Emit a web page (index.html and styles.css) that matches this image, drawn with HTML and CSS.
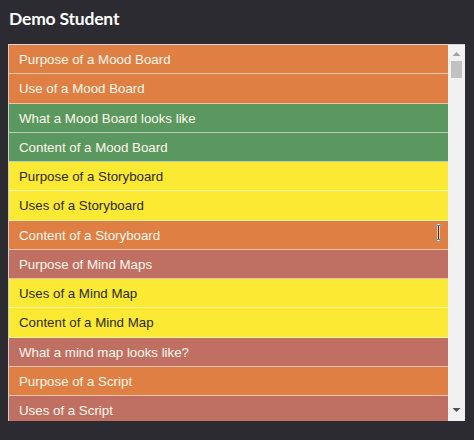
FILE: index.html
```html
<!DOCTYPE html>
<html>
<head>
<meta charset="utf-8">
<link rel="stylesheet" href="styles.css">
</head>
<body>
<div class="page">
  <h1 class="title">Demo Student</h1>
  <div class="box">
    <div class="list">
      <div class="row orange">Purpose of a Mood Board</div>
      <div class="row orange">Use of a Mood Board</div>
      <div class="row green">What a Mood Board looks like</div>
      <div class="row green">Content of a Mood Board</div>
      <div class="row yellow">Purpose of a Storyboard</div>
      <div class="row yellow">Uses of a Storyboard</div>
      <div class="row orange">Content of a Storyboard</div>
      <div class="row rose">Purpose of Mind Maps</div>
      <div class="row yellow">Uses of a Mind Map</div>
      <div class="row yellow">Content of a Mind Map</div>
      <div class="row rose">What a mind map looks like?</div>
      <div class="row orange">Purpose of a Script</div>
      <div class="row rose">Uses of a Script</div>
    </div>
    <div class="scrollbar">
      <div class="arrow up"><svg width="9" height="6" viewBox="0 0 9 6"><path d="M0.5 5 L4.5 1 L8.5 5 Z" fill="#a3a3a3"/></svg></div>
      <div class="track"><div class="thumb"></div></div>
      <div class="arrow down"><svg width="9" height="6" viewBox="0 0 9 6"><path d="M0.5 1 L4.5 5 L8.5 1 Z" fill="#505050"/></svg></div>
    </div>
    <svg class="cursor" width="9" height="17" viewBox="0 0 9 17"><path d="M1 1 H3.5 L4.5 2 L5.5 1 H8 M4.5 2 V15 M1 16 H3.5 L4.5 15 L5.5 16 H8" fill="none" stroke="#fff" stroke-width="2.2"/><path d="M1 1 H3.5 L4.5 2 L5.5 1 H8 M4.5 2 V15 M1 16 H3.5 L4.5 15 L5.5 16 H8" fill="none" stroke="#333" stroke-width="1"/></svg>
  </div>
</div>
</body>
</html>
```
FILE: styles.css
```css
html, body {
  margin: 0;
  padding: 0;
  background: #2c2b31;
}
.page {
  width: 474px;
  height: 440px;
  padding: 8px 0 0 8px;
  box-sizing: border-box;
}
.title {
  margin: 0 0 0 1px;
  font-family: Lato, "Open Sans", sans-serif;
  font-weight: 700;
  font-size: 17.5px;
  line-height: 22px;
  color: #ffffff;
  letter-spacing: -0.2px;
  height: 36px;
}
.box {
  position: relative;
  width: 457px;
  height: 377px;
  box-sizing: border-box;
  border-top: 1px solid #d8d8d8;
  border-left: 1px solid #cfcfcf;
  display: flex;
  background: #fff;
}
.list {
  flex: 1;
  overflow: hidden;
}
.row {
  height: 28.25px;
  line-height: 29px;
  border-bottom: 1px solid rgba(255, 255, 255, 0.55);
  padding-left: 10px;
  font-family: "Liberation Sans", Arial, sans-serif;
  font-size: 13.3px;
  color: #fff8ec;
  white-space: nowrap;
}
.orange { background: #df7f43; }
.green { background: #5b9860; }
.yellow { background: #fbe933; color: #2e2b1c; }
.rose { background: #c07062; }
.scrollbar {
  width: 17px;
  background: #f1f1f1;
  display: flex;
  flex-direction: column;
}
.arrow {
  height: 14px;
  display: flex;
  align-items: center;
  justify-content: center;
}
.up { padding-top: 2px; }
.track {
  flex: 1;
  padding: 0 3px 0 3px;
}
.thumb {
  height: 17px;
  background: #c1c1c1;
}
.down { height: 15px; padding-bottom: 4px; }
.cursor {
  position: absolute;
  left: 425px;
  top: 179px;
}
```
